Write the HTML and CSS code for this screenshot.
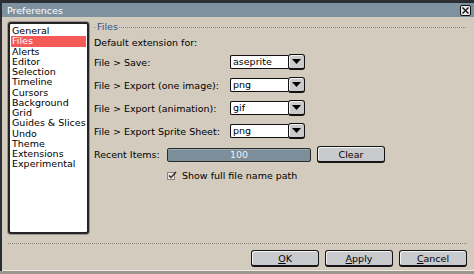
FILE: index.html
```html
<!DOCTYPE html>
<html>
<head>
    <link rel="stylesheet" href="styles.css">
</head>
<body>
    <div class="dialog">
        <div class="titlebar">
            <span class="title">Preferences</span>
            <span class="close-btn">
                <svg width="7" height="7" viewBox="0 0 7 7"><path d="M0.5 0.5L6.5 6.5M6.5 0.5L0.5 6.5" stroke="#111" stroke-width="1.4"/></svg>
            </span>
        </div>
        <div class="dialog-body">
            <div class="main">
                <ul class="section-list">
                    <li>General</li>
                    <li class="selected">Files</li>
                    <li>Alerts</li>
                    <li>Editor</li>
                    <li>Selection</li>
                    <li>Timeline</li>
                    <li>Cursors</li>
                    <li>Background</li>
                    <li>Grid</li>
                    <li>Guides &amp; Slices</li>
                    <li>Undo</li>
                    <li>Theme</li>
                    <li>Extensions</li>
                    <li>Experimental</li>
                </ul>

                <div class="panel">
                    <div class="sep-title">
                        <span class="sep-line short"></span>
                        <span class="sep-text">Files</span>
                        <span class="sep-line"></span>
                    </div>
                    <p class="intro">Default extension for:</p>

                    <div class="ext-grid">
                        <label>File &gt; Save:</label>
                        <div class="combo">
                            <span class="combo-field">aseprite</span>
                            <span class="combo-btn"><svg width="9" height="5" viewBox="0 0 9 5"><polygon points="0,0 9,0 4.5,5" fill="#000"/></svg></span>
                        </div>

                        <label>File &gt; Export (one image):</label>
                        <div class="combo">
                            <span class="combo-field">png</span>
                            <span class="combo-btn"><svg width="9" height="5" viewBox="0 0 9 5"><polygon points="0,0 9,0 4.5,5" fill="#000"/></svg></span>
                        </div>

                        <label>File &gt; Export (animation):</label>
                        <div class="combo">
                            <span class="combo-field">gif</span>
                            <span class="combo-btn"><svg width="9" height="5" viewBox="0 0 9 5"><polygon points="0,0 9,0 4.5,5" fill="#000"/></svg></span>
                        </div>

                        <label>File &gt; Export Sprite Sheet:</label>
                        <div class="combo">
                            <span class="combo-field">png</span>
                            <span class="combo-btn"><svg width="9" height="5" viewBox="0 0 9 5"><polygon points="0,0 9,0 4.5,5" fill="#000"/></svg></span>
                        </div>
                    </div>

                    <div class="recent-row">
                        <span class="recent-label">Recent Items:</span>
                        <div class="slider">100</div>
                        <button class="btn">Clear</button>
                    </div>

                    <div class="check-row">
                        <svg width="10" height="9" viewBox="0 0 10 9">
                            <rect x="0.5" y="1.5" width="7" height="7" fill="#e9e5dd" stroke="#8c877e"/>
                            <path d="M2 4.5L4 6.5L9 1" stroke="#333" stroke-width="1.5" fill="none"/>
                        </svg>
                        <span>Show full file name path</span>
                    </div>
                </div>
            </div>

            <div class="footer-sep"></div>
            <div class="footer">
                <button class="btn"><u>O</u>K</button>
                <button class="btn"><u>A</u>pply</button>
                <button class="btn"><u>C</u>ancel</button>
            </div>
        </div>
    </div>
    <div class="desk-strip"></div>
</body>
</html>
```

FILE: styles.css
```css
body {
    margin: 0;
    background: #2b2f33;
    font-family: "DejaVu Sans", sans-serif;
    font-size: 9.5px;
    color: #000;
}

.dialog {
    margin: 3px 0 0 2px;
    background: #d3cbbd;
    border-bottom: 1px solid #efebe3;
}

.titlebar {
    display: flex;
    align-items: center;
    justify-content: space-between;
    height: 14px;
    padding: 0 3px 0 5px;
    background: #7d929e;
    color: #fff;
}

.close-btn {
    display: flex;
    align-items: center;
    justify-content: center;
    width: 11px;
    height: 11px;
    box-sizing: border-box;
    border: 1px solid #111;
    border-radius: 2px;
    background: #e8e8e8;
}

.dialog-body {
    padding: 5px 7px 3px 6px;
}

.main {
    display: flex;
    height: 212px;
}

.section-list {
    width: 81px;
    height: 212px;
    box-sizing: border-box;
    margin: 0;
    padding: 2px 1px;
    list-style: none;
    background: #fff;
    border: 2px solid #242424;
    border-radius: 3px;
    box-shadow: 0 0 0 1px #9a958c;
}

.section-list li {
    height: 10.25px;
    line-height: 10.25px;
    padding-left: 1px;
    white-space: nowrap;
}

.section-list li.selected {
    background: #f45a58;
    color: #fff;
}

.panel {
    flex: 1;
    margin-left: 5px;
    display: flex;
    flex-direction: column;
}

.sep-title {
    display: flex;
    align-items: center;
    height: 10px;
    color: #34538a;
}

.sep-line {
    flex: 1;
    height: 1px;
    background-image: linear-gradient(to right, #8a857c 50%, transparent 50%);
    background-size: 2px 1px;
}

.sep-line.short {
    flex: none;
    width: 2px;
}

.sep-text {
    padding: 0 1px;
    line-height: 10px;
}

.intro {
    margin: 6px 0 0;
    height: 10px;
    line-height: 10px;
}

.ext-grid {
    display: grid;
    grid-template-columns: 136px 75px;
    row-gap: 7px;
    margin-top: 6px;
}

.ext-grid label {
    display: flex;
    align-items: center;
    height: 16px;
    white-space: nowrap;
}

.combo {
    display: flex;
    height: 16px;
}

.combo-field {
    width: 58px;
    height: 14px;
    margin-top: 1px;
    box-sizing: border-box;
    padding-left: 2px;
    line-height: 12px;
    background: #fff;
    border: 1px solid #111;
    border-right: none;
    border-radius: 2px 0 0 2px;
}

.combo-btn {
    display: flex;
    align-items: center;
    justify-content: center;
    width: 17px;
    height: 16px;
    box-sizing: border-box;
    background: #cbcbcb;
    border: 1px solid #111;
    border-bottom-width: 2px;
    border-radius: 3px;
    box-shadow: inset 1px 1px #f2f2f2;
}

.recent-row {
    display: flex;
    align-items: center;
    height: 17px;
    margin-top: 7px;
}

.recent-label {
    width: 73px;
}

.slider {
    width: 144px;
    height: 14px;
    box-sizing: border-box;
    line-height: 12px;
    text-align: center;
    color: #f2f2f2;
    background: #7b8e9a;
    border: 1px solid #2a2a2a;
    border-radius: 2px;
    box-shadow: inset 0 1px #9cadb7;
}

.btn {
    width: 68px;
    height: 17px;
    box-sizing: border-box;
    padding: 0;
    font: inherit;
    color: #000;
    background: #c9cacd;
    border: 1px solid #151515;
    border-bottom-width: 2px;
    border-radius: 3px;
    box-shadow: inset 1px 1px #f2f2f2;
}

.recent-row .btn {
    margin-left: 6px;
}

.check-row {
    display: flex;
    align-items: center;
    gap: 5px;
    height: 10px;
    margin: 7px 0 0 73px;
}

.footer-sep {
    height: 1px;
    margin-top: 9px;
    background-image: linear-gradient(to right, #8a857c 50%, transparent 50%);
    background-size: 2px 1px;
}

.footer {
    display: flex;
    justify-content: flex-end;
    gap: 6px;
    margin-top: 6px;
    height: 17px;
}

.desk-strip {
    height: 4px;
    background: #9b978f;
}
```
